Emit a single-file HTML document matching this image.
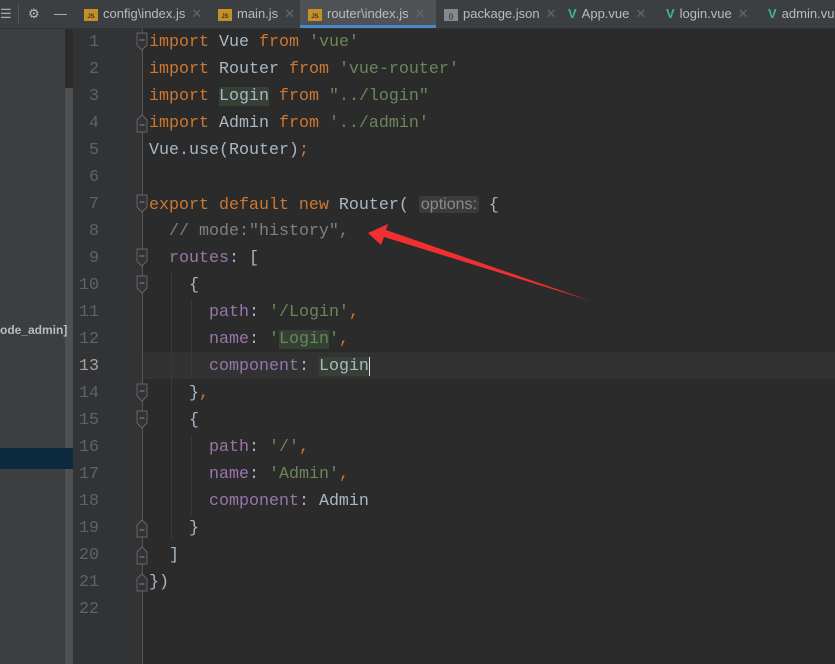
<!DOCTYPE html><html><head><style>
body{margin:0;width:835px;height:664px;overflow:hidden;background:#2b2b2b;position:relative;font-family:"Liberation Mono",monospace}
.abs{position:absolute}
.tabs{left:0;top:0;width:835px;height:28px;background:#3c3f41;border-bottom:1px solid #323232}
.tab{position:absolute;top:0;height:28px;font:13px "Liberation Sans",sans-serif;color:#bbbbbb;line-height:28px;white-space:nowrap}
.js{display:inline-block;width:14px;height:12px;background:#c69026;font:bold 6px sans-serif;color:#333;vertical-align:middle;margin-right:5px;text-align:center;line-height:16px}
.x{color:#666;margin-left:6px}
.v{color:#41b883;font-weight:bold;margin-right:5px}
.ln{position:absolute;left:73px;width:26px;text-align:right;color:#606366;font-size:16.67px;line-height:27px}
.code{position:absolute;left:149px;font-size:16.67px;line-height:27px;color:#a9b7c6;white-space:pre}
.k{color:#cc7832}.s{color:#6a8759}.p{color:#9876aa}.c{color:#808080}.b{color:#6897bb}
</style></head><body>
<div class="abs" style="left:0;top:28px;width:65px;height:636px;background:#3c3f41"></div>
<div class="abs" style="left:65px;top:88px;width:8px;height:576px;background:#4e5052"></div>
<div class="abs" style="left:0;top:448px;width:73px;height:21px;background:#0d293e"></div>
<div class="abs" style="left:0;top:323px;font:bold 12px 'Liberation Sans',sans-serif;color:#bbb">ode_admin]</div>
<div class="abs" style="left:73px;top:28px;width:70px;height:636px;background:#313335"></div>
<div class="abs" style="left:142px;top:28px;width:1px;height:636px;background:#555"></div>
<div class="abs" style="left:143px;top:352px;width:692px;height:27px;background:#323232"></div>
<div class="tabs abs">
<div class="tab" style="left:0;color:#aaa">☰</div>
<div class="abs" style="left:18px;top:4px;width:1px;height:20px;background:#555"></div>
<div class="tab" style="left:28px">⚙</div>
<div class="tab" style="left:54px">—</div>
<div class="tab" style="left:84px"><span class="js">JS</span>config\index.js<span class="x">✕</span></div>
<div class="tab" style="left:218px"><span class="js">JS</span>main.js<span class="x">✕</span></div>
<div class="tab" style="left:300px;background:#4e5254;padding:0 10px 0 8px;border-bottom:3px solid #4a88c7;height:25px"><span class="js">JS</span>router\index.js<span class="x">✕</span></div>
<div class="tab" style="left:444px"><span class="js" style="background:#888">{}</span>package.json<span class="x">✕</span></div>
<div class="tab" style="left:568px"><span class="v">V</span>App.vue<span class="x">✕</span></div>
<div class="tab" style="left:666px"><span class="v">V</span>login.vue<span class="x">✕</span></div>
<div class="tab" style="left:768px"><span class="v">V</span>admin.vue</div>
</div>
<div id="g"></div>
<script>
var L=[
'<span class="k">import</span> Vue <span class="k">from</span> <span class="s">\'vue\'</span>',
'<span class="k">import</span> Router <span class="k">from</span> <span class="s">\'vue-router\'</span>',
'<span class="k">import</span> <span style="background:#344134">Login</span> <span class="k">from</span> <span class="s">"../login"</span>',
'<span class="k">import</span> Admin <span class="k">from</span> <span class="s">\'../admin\'</span>',
'Vue.use(Router)<span class="k">;</span>',
'',
'<span class="k">export default new</span> Router( <span style="background:#3b3b3b;color:#8a8a8a;font-family:\'Liberation Sans\',sans-serif;font-size:16px;border-radius:3px;padding:0 2px">options:</span> {',
'  <span class="c">// mode:"history",</span>',
'  <span class="p">routes</span>: [',
'    {',
'      <span class="p">path</span>: <span class="s">\'/Login\'</span><span class="k">,</span>',
'      <span class="p">name</span>: <span class="s">\'<span style="background:#344134">Login</span>\'</span><span class="k">,</span>',
'      <span class="p">component</span>: <span style="background:#344134">Login</span><span style="border-left:1px solid #ddd"></span>',
'    }<span class="k">,</span>',
'    {',
'      <span class="p">path</span>: <span class="s">\'/\'</span><span class="k">,</span>',
'      <span class="p">name</span>: <span class="s">\'Admin\'</span><span class="k">,</span>',
'      <span class="p">component</span>: Admin',
'    }',
'  ]',
'})',''];
var h='';
for(var i=0;i<22;i++){var t=28.5+27*i;h+='<div class="ln" style="top:'+t+'px;'+(i==12?'color:#a4a3a3':'')+'">'+(i+1)+'</div><div class="code" style="top:'+t+'px">'+L[i]+'</div>';}
[0,6,8,9,13,14].forEach(function(i){var t=42+27*i-10;h+='<svg class="abs" style="left:136px;top:'+t+'px" width="12" height="20"><path d="M1 1H11V13L6 18L1 13Z" fill="#313335" stroke="#666"/><path d="M3.5 8H8.5" stroke="#888"/></svg>';});
[3,18,19,20].forEach(function(i){var t=42+27*i-10;h+='<svg class="abs" style="left:136px;top:'+t+'px" width="12" height="20"><path d="M1 19H11V7L6 2L1 7Z" fill="#313335" stroke="#666"/><path d="M3.5 12H8.5" stroke="#888"/></svg>';});
document.getElementById('g').innerHTML=h;
</script>
<div class="abs" style="left:171px;top:272px;width:1px;height:268px;background:#3a3a3a"></div>
<div class="abs" style="left:191px;top:299px;width:1px;height:80px;background:#3a3a3a"></div>
<div class="abs" style="left:191px;top:435px;width:1px;height:80px;background:#3a3a3a"></div>
<svg class="abs" style="left:0;top:0" width="835" height="664"><path d="M368 233L388 224L386 230L591 301L384 237L381 245Z" fill="#f03030"/></svg>
</body></html>
